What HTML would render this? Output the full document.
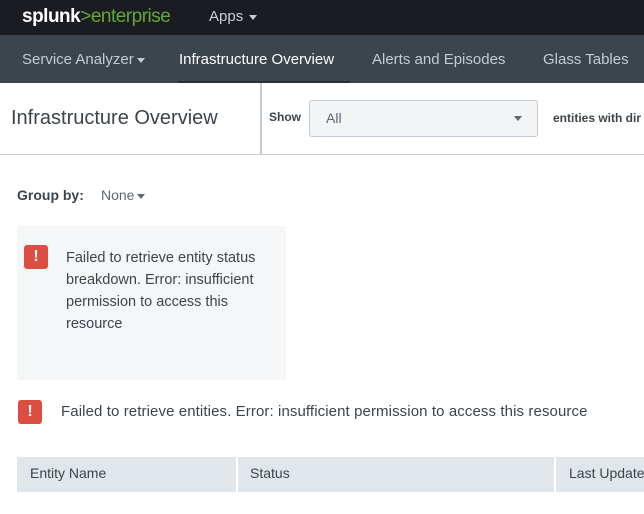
<!DOCTYPE html>
<html><head><meta charset="utf-8"><style>
*{margin:0;padding:0;box-sizing:border-box}
body{width:644px;height:514px;overflow:hidden;background:#fff;font-family:"Liberation Sans",sans-serif;color:#3c444d;position:relative}
.a{position:absolute;white-space:nowrap}
.tri{display:inline-block;width:0;height:0;border-left:4px solid transparent;border-right:4px solid transparent;border-top:5px solid currentColor;vertical-align:middle;margin-left:3px}
.ic{position:absolute;width:24px;height:24px;background:#dc4e41;border-radius:3px;color:#fff;font-weight:bold;font-size:16px;text-align:center;line-height:24px}
</style></head><body>
<div class="a" style="left:0;top:0;width:644px;height:35px;background:#1a1c21"></div>
<div class="a" style="left:22px;top:6px;font-size:19px;color:#fff;font-weight:bold;letter-spacing:-0.5px">splunk<span style="color:#65a637;font-weight:normal">&gt;enterprise</span></div>
<div class="a" style="left:209px;top:8px;font-size:15px;color:#ccd;">Apps<span class="tri" style="margin-left:6px"></span></div>
<div class="a" style="left:0;top:35px;width:644px;height:48px;background:#3c444d"></div>
<div class="a" style="left:22px;top:51px;font-size:15px;color:#c3cbd4">Service Analyzer<span class="tri"></span></div>
<div class="a" style="left:179px;top:51px;font-size:15px;color:#fff">Infrastructure Overview</div>
<div class="a" style="left:178px;top:81px;width:172px;height:2px;background:#2b3033"></div>
<div class="a" style="left:372px;top:51px;font-size:15px;color:#c3cbd4">Alerts and Episodes</div>
<div class="a" style="left:543px;top:51px;font-size:15px;color:#c3cbd4">Glass Tables</div>
<div class="a" style="left:0;top:154px;width:644px;height:1px;background:#c3cbd4"></div>
<div class="a" style="left:260px;top:83px;width:2px;height:71px;background:#c3cbd4"></div>
<div class="a" style="left:11px;top:107px;font-size:20px;color:#3c444d">Infrastructure Overview</div>
<div class="a" style="left:269px;top:110px;font-size:12px;font-weight:bold">Show</div>
<div class="a" style="left:309px;top:100px;width:229px;height:37px;background:#f2f4f5;border:1px solid #c3cbd4;border-radius:3px"></div>
<div class="a" style="left:326px;top:110px;font-size:14px;color:#5c6773">All</div>
<div class="a" style="left:514px;top:116px;width:0;height:0;border-left:4px solid transparent;border-right:4px solid transparent;border-top:5px solid #5c6773"></div>
<div class="a" style="left:553px;top:111px;font-size:12px;font-weight:bold">entities with dir</div>
<div class="a" style="left:17px;top:187px;font-size:14px;font-weight:bold">Group by:</div>
<div class="a" style="left:101px;top:187px;font-size:14px;color:#5c6773">None<span class="tri"></span></div>
<div class="a" style="left:17px;top:226px;width:269px;height:154px;background:#f5f6f8"></div>
<div class="ic" style="left:24px;top:245px">!</div>
<div class="a" style="left:66px;top:247px;font-size:14.5px;line-height:22px;white-space:normal;width:212px">Failed to retrieve entity status breakdown. Error: insufficient permission to access this resource</div>
<div class="ic" style="left:18px;top:400px">!</div>
<div class="a" style="left:61px;top:403px;font-size:15px;letter-spacing:0.1px">Failed to retrieve entities. Error: insufficient permission to access this resource</div>
<div class="a" style="left:17px;top:457px;width:627px;height:35px;background:#e1e6eb"></div>
<div class="a" style="left:236px;top:457px;width:2px;height:35px;background:#fff"></div>
<div class="a" style="left:554px;top:457px;width:2px;height:35px;background:#fff"></div>
<div class="a" style="left:30px;top:465px;font-size:14px">Entity Name</div>
<div class="a" style="left:250px;top:465px;font-size:14px">Status</div>
<div class="a" style="left:569px;top:465px;font-size:14px">Last Update</div>
</body></html>
